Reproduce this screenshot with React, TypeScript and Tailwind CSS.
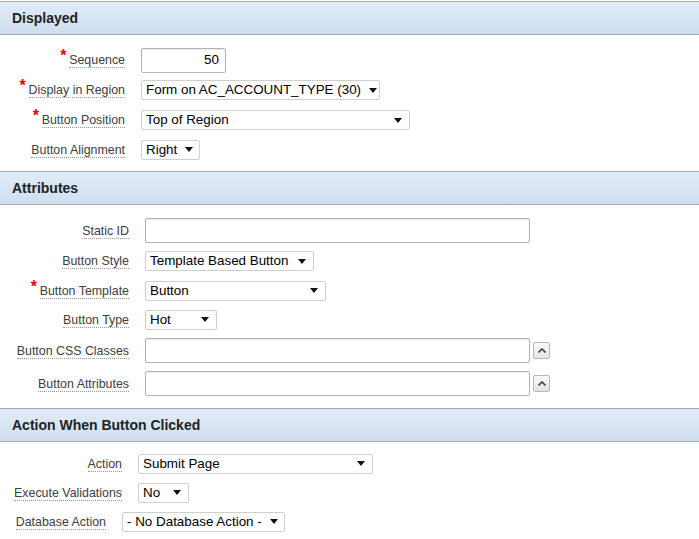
import type { ReactNode } from "react";

const font = "font-['Liberation_Sans',Arial,sans-serif]";

function SectionHeader({ title }: { title: string }) {
  return (
    <div className="h-[34px] border-t border-b border-[#a9a9a9] bg-gradient-to-b from-[#e1ecf9] to-[#cfdeef] flex items-center pl-[12px]">
      <span className="text-[14px] font-bold text-[#222]">{title}</span>
    </div>
  );
}

function Label({ text, required, width }: { text: string; required?: boolean; width: number }) {
  return (
    <div className="flex justify-end shrink-0 leading-none" style={{ width }}>
      <div className="relative flex">
        {required && (
          <span className="absolute -left-[9px] -top-[4px] text-[16px] font-bold text-[#e00] leading-none">*</span>
        )}
        <span className="block text-[12.4px] text-[#404040] border-b border-dotted border-[#999] leading-[14px] pt-px">
          {text}
        </span>
      </div>
    </div>
  );
}

function Select({ value, width }: { value: string; width: number }) {
  return (
    <div
      className="h-[20px] border border-[#cfcfcf] rounded-[2px] bg-white flex items-center justify-between pl-[4px] pr-[7px]"
      style={{ width }}
    >
      <span className="text-[13.4px] text-black leading-none whitespace-nowrap">{value}</span>
      <svg width="8" height="5" viewBox="0 0 8 5" className="shrink-0 ml-2">
        <path d="M0 0h8L4 5z" fill="#111" />
      </svg>
    </div>
  );
}

function Input({ value, width, right }: { value?: string; width: number; right?: boolean }) {
  return (
    <div
      className={`h-[25px] border border-[#b3b3b3] rounded-[2px] bg-white shadow-[inset_0_1px_1px_rgba(0,0,0,0.08)] flex items-center px-[6px] text-[13.4px] text-black ${right ? "justify-end" : ""}`}
      style={{ width }}
    >
      {value}
    </div>
  );
}

function ExpandButton() {
  return (
    <div className="w-[17px] h-[17px] border border-[#b8b8b8] rounded-[2px] bg-gradient-to-b from-[#fafafa] to-[#e4e4e4] flex items-center justify-center ml-[3px]">
      <svg width="8" height="5" viewBox="0 0 8 5">
        <path d="M0.5 4.5L4 1l3.5 3.5" stroke="#444" strokeWidth="1.6" fill="none" />
      </svg>
    </div>
  );
}

function Row({
  label,
  required,
  labelWidth,
  gap,
  height,
  children,
}: {
  label: string;
  required?: boolean;
  labelWidth: number;
  gap: number;
  height: number;
  children: ReactNode;
}) {
  return (
    <div className="flex items-center" style={{ height }}>
      <Label text={label} required={required} width={labelWidth} />
      <div className="flex items-center" style={{ marginLeft: gap }}>
        {children}
      </div>
    </div>
  );
}

export default function App() {
  return (
    <div className={`${font} w-[699px] h-[539px] bg-white overflow-hidden pt-px`}>
      <SectionHeader title="Displayed" />
      <div className="pt-[10px] h-[136px]">
        <Row label="Sequence" required labelWidth={125} gap={16} height={30}>
          <Input value="50" width={85} right />
        </Row>
        <Row label="Display in Region" required labelWidth={125} gap={16} height={30}>
          <Select value="Form on AC_ACCOUNT_TYPE (30)" width={239} />
        </Row>
        <Row label="Button Position" required labelWidth={125} gap={16} height={30}>
          <Select value="Top of Region" width={269} />
        </Row>
        <Row label="Button Alignment" labelWidth={125} gap={16} height={29}>
          <Select value="Right" width={59} />
        </Row>
      </div>

      <SectionHeader title="Attributes" />
      <div className="pt-[10px] h-[203px]">
        <Row label="Static ID" labelWidth={129} gap={16} height={31}>
          <Input width={385} />
        </Row>
        <Row label="Button Style" labelWidth={129} gap={16} height={30}>
          <Select value="Template Based Button" width={169} />
        </Row>
        <Row label="Button Template" required labelWidth={129} gap={16} height={29}>
          <Select value="Button" width={181} />
        </Row>
        <Row label="Button Type" labelWidth={129} gap={16} height={29}>
          <Select value="Hot" width={72} />
        </Row>
        <Row label="Button CSS Classes" labelWidth={129} gap={16} height={33}>
          <Input width={385} />
          <ExpandButton />
        </Row>
        <Row label="Button Attributes" labelWidth={129} gap={16} height={33}>
          <Input width={385} />
          <ExpandButton />
        </Row>
      </div>

      <SectionHeader title="Action When Button Clicked" />
      <div className="pt-[7px]">
        <Row label="Action" labelWidth={122} gap={16} height={29}>
          <Select value="Submit Page" width={235} />
        </Row>
        <Row label="Execute Validations" labelWidth={122} gap={16} height={29}>
          <Select value="No" width={51} />
        </Row>
        <Row label="Database Action" labelWidth={106} gap={16} height={29}>
          <Select value="- No Database Action -" width={163} />
        </Row>
      </div>
    </div>
  );
}
